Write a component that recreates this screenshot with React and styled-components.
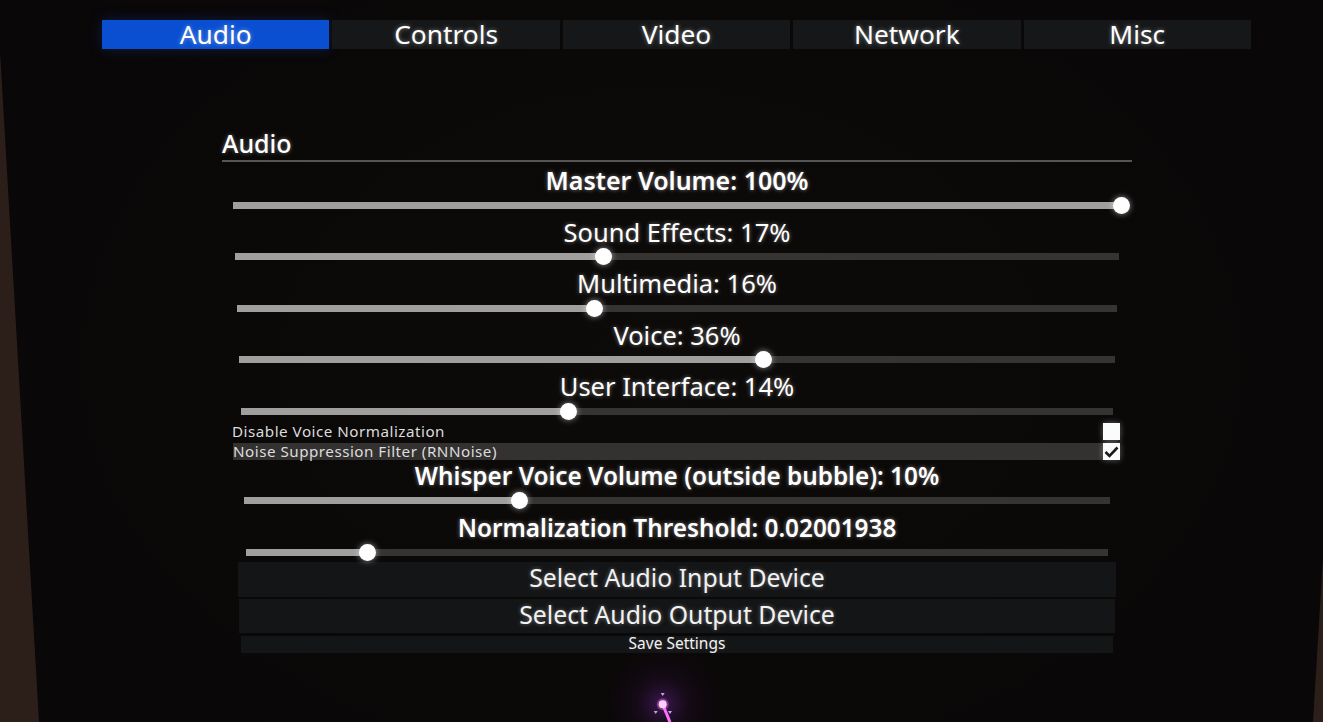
import React from "react";
import styled, { createGlobalStyle } from "styled-components";

const Global = createGlobalStyle`
  html, body { margin: 0; padding: 0; background: #2c1f1a; }
  body { font-family: "Noto Sans", "Open Sans", sans-serif; color: #fff; }
  * { box-sizing: border-box; }
`;

const Page = styled.div`
  position: relative;
  width: 1323px;
  height: 722px;
  overflow: hidden;
  background: #2c1f1a;
`;

const Panel = styled.div`
  width: 100%;
  height: 100%;
  padding-top: 20px;
  background: radial-gradient(ellipse 700px 500px at 660px 360px, #0d0a0a 0%, #0b0808 60%, #090707 100%);
  clip-path: polygon(-3px 0, 1357px 0, 1313px 722px, 39px 722px);
  display: flex;
  flex-direction: column;
`;

const TabBar = styled.div`
  margin-left: 102px;
  width: 1149px;
  height: 29px;
  display: grid;
  grid-template-columns: repeat(5, 1fr);
  gap: 3px;
`;

const Tab = styled.div`
  background: ${(p) => (p.$active ? "#0a4fd1" : "#161718")};
  box-shadow: ${(p) => (p.$active ? "0 0 14px rgba(30,90,230,0.25)" : "none")};
  display: flex;
  align-items: center;
  justify-content: center;
  font-size: 26.3px;
  line-height: 29px;
  color: #fff;
  text-shadow: 0 0 4px rgba(255, 255, 255, 0.45);
`;

const Section = styled.div`
  margin-left: 222px;
  width: 910px;
  margin-top: 80px;
  display: flex;
  flex-direction: column;
`;

const Header = styled.div`
  font-size: 25px;
  line-height: 28px;
  height: 28px;
  font-weight: 500;
  text-shadow: 0 0 4px rgba(255, 255, 255, 0.4);
`;

const Divider = styled.div`
  margin-top: 3px;
  height: 2px;
  background: #565555;
`;

const SliderGroup = styled.div`
  margin-top: 4px;
  display: flex;
  flex-direction: column;
  gap: 2.5px;
`;

const Row = styled.div`
  height: 49px;
  display: flex;
  flex-direction: column;
  padding: 0 ${(p) => p.$inset}px;
`;

const Label = styled.div`
  height: 29px;
  line-height: 29px;
  text-align: center;
  font-size: ${(p) => p.$size}px;
  font-weight: ${(p) => (p.$bold ? 600 : 400)};
  white-space: nowrap;
  text-shadow: 0 0 4px rgba(255, 255, 255, 0.45);
`;

const TrackWrap = styled.div`
  height: 20px;
  display: flex;
  align-items: center;
`;

const Track = styled.div`
  position: relative;
  flex: 1;
  height: 7px;
  background: #363333;
`;

const Fill = styled.div`
  height: 100%;
  background: #9f9f9f;
`;

const Thumb = styled.div`
  position: absolute;
  top: 50%;
  width: 17px;
  height: 17px;
  margin: -8.5px 0 0 -8.5px;
  border-radius: 50%;
  background: #fff;
  box-shadow: 0 0 6px rgba(255, 255, 255, 0.55);
`;

const ToggleGroup = styled.div`
  margin-top: 1px;
  display: flex;
  flex-direction: column;
  gap: 2px;
`;

const ToggleRow = styled.div`
  height: 18px;
  display: flex;
  align-items: center;
  padding-left: ${(p) => p.$inset}px;
  padding-right: 12px;
`;

const ToggleLabel = styled.div`
  flex: 1;
  height: 17px;
  line-height: 16px;
  font-size: 15.2px;
  letter-spacing: 0.5px;
  color: #dcdcdc;
  background: ${(p) => (p.$hover ? "#343131" : "transparent")};
  white-space: nowrap;
`;

const Box = styled.div`
  width: 17px;
  height: 17px;
  background: #fbfbfb;
  box-shadow: 0 0 6px rgba(255, 255, 255, 0.35);
  display: flex;
  align-items: center;
  justify-content: center;
`;

const LowerGroup = styled.div`
  margin-top: 1px;
  display: flex;
  flex-direction: column;
  gap: 3px;
`;

const ButtonGroup = styled.div`
  display: flex;
  flex-direction: column;
  gap: 2px;
`;

const Button = styled.div`
  margin: ${(p) => p.$top || 0}px ${(p) => p.$inset}px 0;
  height: ${(p) => p.$h}px;
  padding-bottom: ${(p) => (p.$fs > 18 ? 4 : 1)}px;
  background: #141516;
  display: flex;
  align-items: center;
  justify-content: center;
  font-size: ${(p) => p.$fs}px;
  line-height: 1;
  color: #f2f2f2;
  white-space: nowrap;
  text-shadow: 0 0 4px rgba(255, 255, 255, ${(p) => (p.$fs > 18 ? 0.4 : 0.15)});
`;

const Pointer = styled.div`
  position: absolute;
  left: 592px;
  top: 640px;
  width: 140px;
  height: 82px;
  pointer-events: none;
`;

function Slider({ label, value, inset, bold, size = 25.5 }) {
  return (
    <Row $inset={inset}>
      <Label $bold={bold} $size={size}>{label}</Label>
      <TrackWrap>
        <Track>
          <Fill style={{ width: `${value * 100}%` }} />
          <Thumb style={{ left: `${value * 100}%` }} />
        </Track>
      </TrackWrap>
    </Row>
  );
}

function Check({ checked }) {
  return (
    <Box>
      {checked && (
        <svg width="15" height="13" viewBox="0 0 15 13">
          <path d="M1.5 7 L5.5 11 L13.5 2.5" fill="none" stroke="#1a1a1a" strokeWidth="2.6" strokeLinejoin="miter" />
        </svg>
      )}
    </Box>
  );
}

const tabs = ["Audio", "Controls", "Video", "Network", "Misc"];

export default function App() {
  return (
    <Page>
      <Global />
      <Panel>
        <TabBar>
          {tabs.map((t, i) => (
            <Tab key={t} $active={i === 0}>{t}</Tab>
          ))}
        </TabBar>
        <Section>
          <Header>Audio</Header>
          <Divider />
          <SliderGroup>
            <Slider label="Master Volume: 100%" value={1} inset={11} bold size={25} />
            <Slider label="Sound Effects: 17%" value={(603 - 235) / 884} inset={13} />
            <Slider label="Multimedia: 16%" value={(594 - 237) / 880} inset={15} />
            <Slider label="Voice: 36%" value={(763 - 239) / 876} inset={17} />
            <Slider label="User Interface: 14%" value={(568 - 241) / 872} inset={19} />
          </SliderGroup>
          <ToggleGroup>
            <ToggleRow $inset={10}>
              <ToggleLabel>Disable Voice Normalization</ToggleLabel>
              <Check />
            </ToggleRow>
            <ToggleRow $inset={11}>
              <ToggleLabel $hover>Noise Suppression Filter (RNNoise)</ToggleLabel>
              <Check checked />
            </ToggleRow>
          </ToggleGroup>
          <LowerGroup>
            <Slider label="Whisper Voice Volume (outside bubble): 10%" value={(519 - 244) / 864} inset={22} bold size={24.3} />
            <Slider label="Normalization Threshold: 0.02001938" value={(367 - 246) / 860} inset={24} bold size={24.3} />
          </LowerGroup>
          <ButtonGroup>
            <Button $inset={16} $h={35} $fs={24.8}>Select Audio Input Device</Button>
            <Button $inset={17} $h={34} $fs={24.8}>Select Audio Output Device</Button>
            <Button $inset={19} $h={17} $fs={15.5} $top={1}>Save Settings</Button>
          </ButtonGroup>
        </Section>
      </Panel>
      <Pointer>
        <svg width="140" height="82" viewBox="0 0 140 82">
          <defs>
            <radialGradient id="glow" cx="70.7" cy="64" r="60" gradientUnits="userSpaceOnUse">
              <stop offset="0" stopColor="#b040ff" stopOpacity="0.3" />
              <stop offset="0.45" stopColor="#6a2090" stopOpacity="0.1" />
              <stop offset="1" stopColor="#300040" stopOpacity="0" />
            </radialGradient>
          </defs>
          <rect x="0" y="0" width="140" height="82" fill="url(#glow)" />
          <line x1="70.7" y1="64.5" x2="78" y2="82" stroke="#ff70ff" strokeWidth="3" />
          <circle cx="70.7" cy="64.3" r="6" fill="#ff80ff" opacity="0.35" />
          <circle cx="70.7" cy="64.3" r="4" fill="#ffd0ff" />
          <path d="M68.7 53 L72.7 53 L70.7 56 Z" fill="#c9a0e0" />
          <path d="M61.7 71 L65.7 71 L63.7 74 Z" fill="#c9a0e0" />
          <path d="M76 71 L80 71 L78 74 Z" fill="#c9a0e0" />
        </svg>
      </Pointer>
    </Page>
  );
}
